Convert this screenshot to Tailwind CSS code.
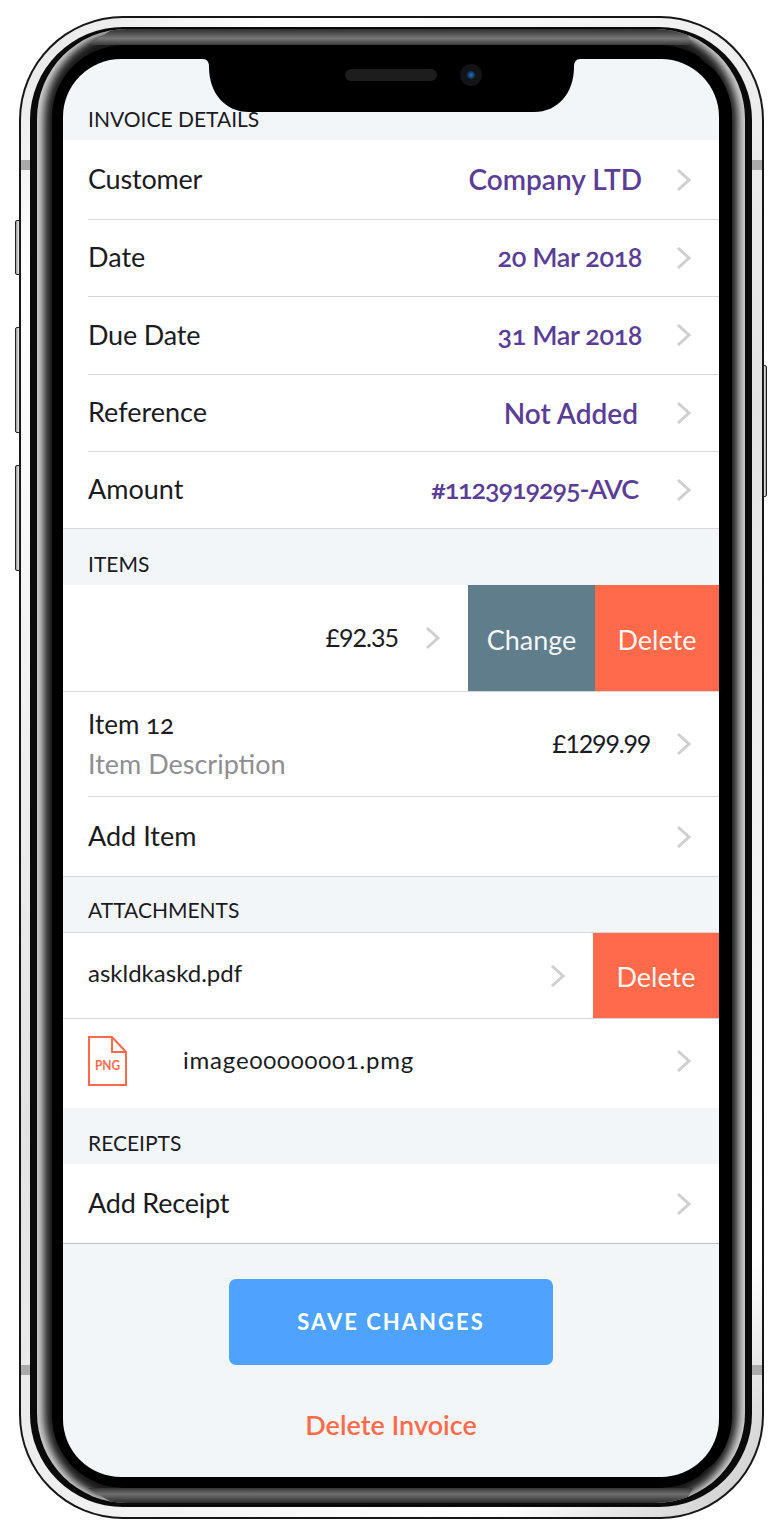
<!DOCTYPE html>
<html lang="en">
<head>
    <meta charset="UTF-8">
    <meta name="viewport" content="width=device-width, initial-scale=1.0">
    <title>Edit Invoice</title>
    <script src="https://cdn.jsdelivr.net/npm/@tailwindcss/browser@4"></script>
</head>
<body class="bg-white pl-[19px] pt-[16px] font-['Lato','Open_Sans',sans-serif] oldstyle-nums text-[#1b1b1f]">
    <!-- phone shell -->
    <div class="relative w-[745px] h-[1503px]">
        <!-- side buttons -->
        <div class="absolute left-[-4px] top-[204px] w-[5px] h-[55px] rounded-l-[2px] border border-[#222] bg-[linear-gradient(90deg,#999,#eee)]"></div>
        <div class="absolute left-[-4px] top-[311px] w-[5px] h-[106px] rounded-l-[2px] border border-[#222] bg-[linear-gradient(90deg,#999,#eee)]"></div>
        <div class="absolute left-[-4px] top-[449px] w-[5px] h-[106px] rounded-l-[2px] border border-[#222] bg-[linear-gradient(90deg,#999,#eee)]"></div>
        <div class="absolute right-[-3px] top-[349px] w-[4px] h-[132px] rounded-r-[2px] border border-[#222] bg-[linear-gradient(90deg,#eee,#999)]"></div>

        <div class="h-full rounded-[104px] bg-[#161616] p-[2px]">
            <div class="relative h-full rounded-[102px] bg-[linear-gradient(135deg,#e4e4e4,#fff_12%,#e2e2e2_50%,#fff_88%,#c8c8c8)] pl-[9px] pr-[10px] pt-[9px] pb-[10px]">
                <!-- antenna bands -->
                <div class="absolute left-0 top-[142px] w-[9px] h-[10px] bg-[#aaa]"></div>
                <div class="absolute right-0 top-[142px] w-[10px] h-[10px] bg-[#aaa]"></div>
                <div class="absolute left-0 top-[1347px] w-[9px] h-[10px] bg-[#aaa]"></div>
                <div class="absolute right-0 top-[1347px] w-[10px] h-[10px] bg-[#aaa]"></div>

                <div class="h-full rounded-[93px] bg-[#0a0a0a] pl-[7px] pr-[7px] pt-[2px] pb-[4px]">
                    <div class="relative h-full overflow-hidden rounded-[90px] bg-[#1a1a1a] shadow-[inset_7px_0_8px_0_#d4d4d4,inset_-7px_0_8px_0_#d4d4d4] pl-[15px] pr-[13px] pt-[16px] pb-[15px]">
                        <!-- top and bottom bezel -->
                        <div class="absolute inset-x-0 top-0 h-[16px] [clip-path:polygon(76px_0,calc(100%-60px)_0,calc(100%-52px)_100%,51px_100%)] bg-[linear-gradient(180deg,#2e2e2e,#777_60%,#3a3a3a)]"></div>
                        <div class="absolute inset-x-0 bottom-0 h-[15px] [clip-path:polygon(51px_0,calc(100%-52px)_0,calc(100%-60px)_100%,76px_100%)] bg-[linear-gradient(0deg,#2a2a2a,#707070_60%,#333)]"></div>

                        <div class="relative h-full overflow-hidden rounded-[72px] bg-black pl-[11px] pr-[13px] pt-[14px] pb-[11px]">
                            <!-- corner gleams -->
                            <div class="absolute left-0 top-0 w-[36px] h-[40px] [clip-path:polygon(36px_0,20px_13px,0_40px,0_0)] bg-[linear-gradient(135deg,#8a8a8a,#000_75%)]"></div>
                            <div class="absolute right-0 top-0 w-[36px] h-[40px] [clip-path:polygon(0_0,4px_13px,100%_40px,100%_0)] bg-[linear-gradient(225deg,#8a8a8a,#000_75%)]"></div>
                            <div class="absolute left-0 bottom-0 w-[36px] h-[40px] [clip-path:polygon(36px_100%,20px_27px,0_0,0_100%)] bg-[linear-gradient(45deg,#8a8a8a,#000_75%)]"></div>
                            <div class="absolute right-0 bottom-0 w-[36px] h-[40px] [clip-path:polygon(0_100%,4px_27px,100%_0,100%_100%)] bg-[linear-gradient(315deg,#8a8a8a,#000_75%)]"></div>

                            <!-- screen -->
                            <div class="relative h-full overflow-hidden rounded-[58px] bg-[#f3f6f9]">
                                <!-- notch -->
                                <svg class="absolute left-[140px] top-0 z-10" width="377" height="53" viewBox="0 0 377 53">
                                    <path d="M0 0 Q6 0 6 8 C6 34 22 53 46 53 H331 C355 53 371 34 371 8 Q371 0 377 0 Z" fill="#000"/>
                                </svg>
                                <div class="absolute left-[282px] top-[10px] z-20 w-[92px] h-[12px] rounded-full bg-[#1d1d1d]"></div>
                                <div class="absolute left-[397px] top-[5px] z-20 flex w-[22px] h-[22px] items-center justify-center rounded-full bg-[#141416]">
                                    <div class="w-[10px] h-[10px] rounded-full bg-[radial-gradient(circle,#2a6fb5_0,#123a63_45%,#05070a_75%)]"></div>
                                </div>

                                <!-- invoice details -->
                                <div class="flex h-[81px] items-end pl-[25px] pb-[8px]">
                                    <h2 class="text-[21px] leading-[26px]">INVOICE DETAILS</h2>
                                </div>
                                <div class="bg-white pl-[25px]">
                                    <div class="flex h-[80px] items-center border-b border-[#d6d6d8] pr-[27px]">
                                        <span class="text-[27px] tracking-[-0.2px]">Customer</span>
                                        <span class="ml-auto pb-[2px] text-[28px] font-semibold text-[#5a3d94]">Company LTD</span>
                                        <svg class="ml-[34px]" width="16" height="24" viewBox="0 0 16 24" fill="none" stroke="#cfcfcf" stroke-width="3"><path d="M2 2l11 10L2 22"/></svg>
                                    </div>
                                    <div class="flex h-[77px] items-center border-b border-[#d6d6d8] pb-[1px] pr-[27px]">
                                        <span class="text-[27px]">Date</span>
                                        <span class="ml-auto text-[27px] font-semibold tracking-[-0.4px] text-[#5a3d94]">20 Mar 2018</span>
                                        <svg class="ml-[34px]" width="16" height="24" viewBox="0 0 16 24" fill="none" stroke="#cfcfcf" stroke-width="3"><path d="M2 2l11 10L2 22"/></svg>
                                    </div>
                                    <div class="flex h-[78px] items-center border-b border-[#d6d6d8] pb-[1px] pr-[27px]">
                                        <span class="text-[27px] tracking-[-0.2px]">Due Date</span>
                                        <span class="ml-auto text-[27px] font-semibold tracking-[-0.4px] text-[#5a3d94]">31 Mar 2018</span>
                                        <svg class="ml-[34px]" width="16" height="24" viewBox="0 0 16 24" fill="none" stroke="#cfcfcf" stroke-width="3"><path d="M2 2l11 10L2 22"/></svg>
                                    </div>
                                    <div class="flex h-[77px] items-center border-b border-[#d6d6d8] pb-[1px] pr-[27px]">
                                        <span class="text-[27px]">Reference</span>
                                        <span class="ml-auto text-[28px] font-semibold text-[#5a3d94]">Not Added</span>
                                        <svg class="ml-[38px]" width="16" height="24" viewBox="0 0 16 24" fill="none" stroke="#cfcfcf" stroke-width="3"><path d="M2 2l11 10L2 22"/></svg>
                                    </div>
                                </div>
                                <div class="flex h-[77px] items-center border-b border-[#d6d6d8] bg-white pb-[1px] pl-[25px] pr-[27px]">
                                    <span class="text-[27px]">Amount</span>
                                    <span class="ml-auto text-[27px] font-semibold tracking-[-1.1px] text-[#5a3d94]">#1123919295-AVC</span>
                                    <svg class="ml-[38px]" width="16" height="24" viewBox="0 0 16 24" fill="none" stroke="#cfcfcf" stroke-width="3"><path d="M2 2l11 10L2 22"/></svg>
                                </div>

                                <!-- items -->
                                <div class="flex h-[56px] items-end pl-[25px] pb-[8px]">
                                    <h2 class="text-[21px] leading-[26px]">ITEMS</h2>
                                </div>
                                <div class="flex h-[107px] border-b border-[#d6d6d8] bg-white">
                                    <div class="flex flex-1 items-center justify-end pr-[27px]">
                                        <span class="text-[25px] tracking-[-1px] lining-nums">£92.35</span>
                                        <svg class="ml-[27px]" width="16" height="24" viewBox="0 0 16 24" fill="none" stroke="#cfcfcf" stroke-width="3"><path d="M2 2l11 10L2 22"/></svg>
                                    </div>
                                    <div class="flex w-[127px] items-center justify-center bg-[#607d8b] pt-[4px] text-[27px] text-white/95">Change</div>
                                    <div class="flex w-[124px] items-center justify-center bg-[#ff6b4a] pt-[4px] text-[27px] text-white/95">Delete</div>
                                </div>
                                <div class="bg-white pl-[25px]">
                                    <div class="flex h-[105px] items-center border-b border-[#d6d6d8] pr-[27px]">
                                        <div class="flex flex-col">
                                            <span class="text-[26px] leading-[39px]">Item 12</span>
                                            <span class="text-[27px] leading-[39px] text-[#8e8e93]">Item Description</span>
                                        </div>
                                        <span class="ml-auto text-[25px] tracking-[-1.2px] lining-nums">£1299.99</span>
                                        <svg class="ml-[26px]" width="16" height="24" viewBox="0 0 16 24" fill="none" stroke="#cfcfcf" stroke-width="3"><path d="M2 2l11 10L2 22"/></svg>
                                    </div>
                                </div>
                                <div class="flex h-[80px] items-center border-b border-[#d6d6d8] bg-white pl-[25px] pr-[27px]">
                                    <span class="text-[27px]">Add Item</span>
                                    <svg class="ml-auto" width="16" height="24" viewBox="0 0 16 24" fill="none" stroke="#cfcfcf" stroke-width="3"><path d="M2 2l11 10L2 22"/></svg>
                                </div>

                                <!-- attachments -->
                                <div class="flex h-[55px] items-end pl-[25px] pb-[9px]">
                                    <h2 class="text-[21px] leading-[26px]">ATTACHMENTS</h2>
                                </div>
                                <div class="flex h-[87px] border-y border-[#d6d6d8] bg-white">
                                    <div class="flex flex-1 items-center pl-[25px] pr-[27px]">
                                        <span class="pb-[6px] text-[24px]">askldkaskd.pdf</span>
                                        <svg class="ml-auto" width="16" height="24" viewBox="0 0 16 24" fill="none" stroke="#cfcfcf" stroke-width="3"><path d="M2 2l11 10L2 22"/></svg>
                                    </div>
                                    <div class="flex w-[126px] items-center justify-center bg-[#ff6b4a] pt-[3px] text-[27px] text-white/95">Delete</div>
                                </div>
                                <div class="flex h-[89px] items-center bg-white pl-[25px] pr-[27px] pb-[5px]">
                                    <div class="relative w-[39px] h-[50px]">
                                        <svg class="absolute inset-0" width="39" height="50" viewBox="0 0 39 50" fill="none" stroke="#ff6b4a" stroke-width="2"><path d="M1 1H24L38 16V49H1Z"/><path d="M24 1V16H38"/></svg>
                                        <span class="absolute inset-x-0 top-[22px] scale-x-[0.85] text-center text-[14px] leading-[14px] font-bold text-[#ff6b4a]">PNG</span>
                                    </div>
                                    <span class="ml-[56px] pb-[3px] text-[24px] tracking-[0.8px]">image00000001.pmg</span>
                                    <svg class="ml-auto" width="16" height="24" viewBox="0 0 16 24" fill="none" stroke="#cfcfcf" stroke-width="3"><path d="M2 2l11 10L2 22"/></svg>
                                </div>

                                <!-- receipts -->
                                <div class="flex h-[56px] items-end pl-[25px] pb-[8px]">
                                    <h2 class="text-[21px] leading-[26px]">RECEIPTS</h2>
                                </div>
                                <div class="flex h-[80px] items-center border-b border-[#b9bcc2] bg-white pl-[25px] pr-[27px]">
                                    <span class="text-[27px] tracking-[-0.2px]">Add Receipt</span>
                                    <svg class="ml-auto" width="16" height="24" viewBox="0 0 16 24" fill="none" stroke="#cfcfcf" stroke-width="3"><path d="M2 2l11 10L2 22"/></svg>
                                </div>

                                <!-- actions -->
                                <div class="flex flex-col items-center pt-[35px]">
                                    <button class="h-[86px] w-[324px] rounded-[7px] bg-[#4da3ff] pb-[2px] text-[22px] font-bold tracking-[2px] text-white">SAVE CHANGES</button>
                                    <button class="mt-[40px] text-[27px] font-semibold text-[#ff6b4a]">Delete Invoice</button>
                                </div>
                            </div>
                        </div>
                    </div>
                </div>
            </div>
        </div>
    </div>
</body>
</html>
